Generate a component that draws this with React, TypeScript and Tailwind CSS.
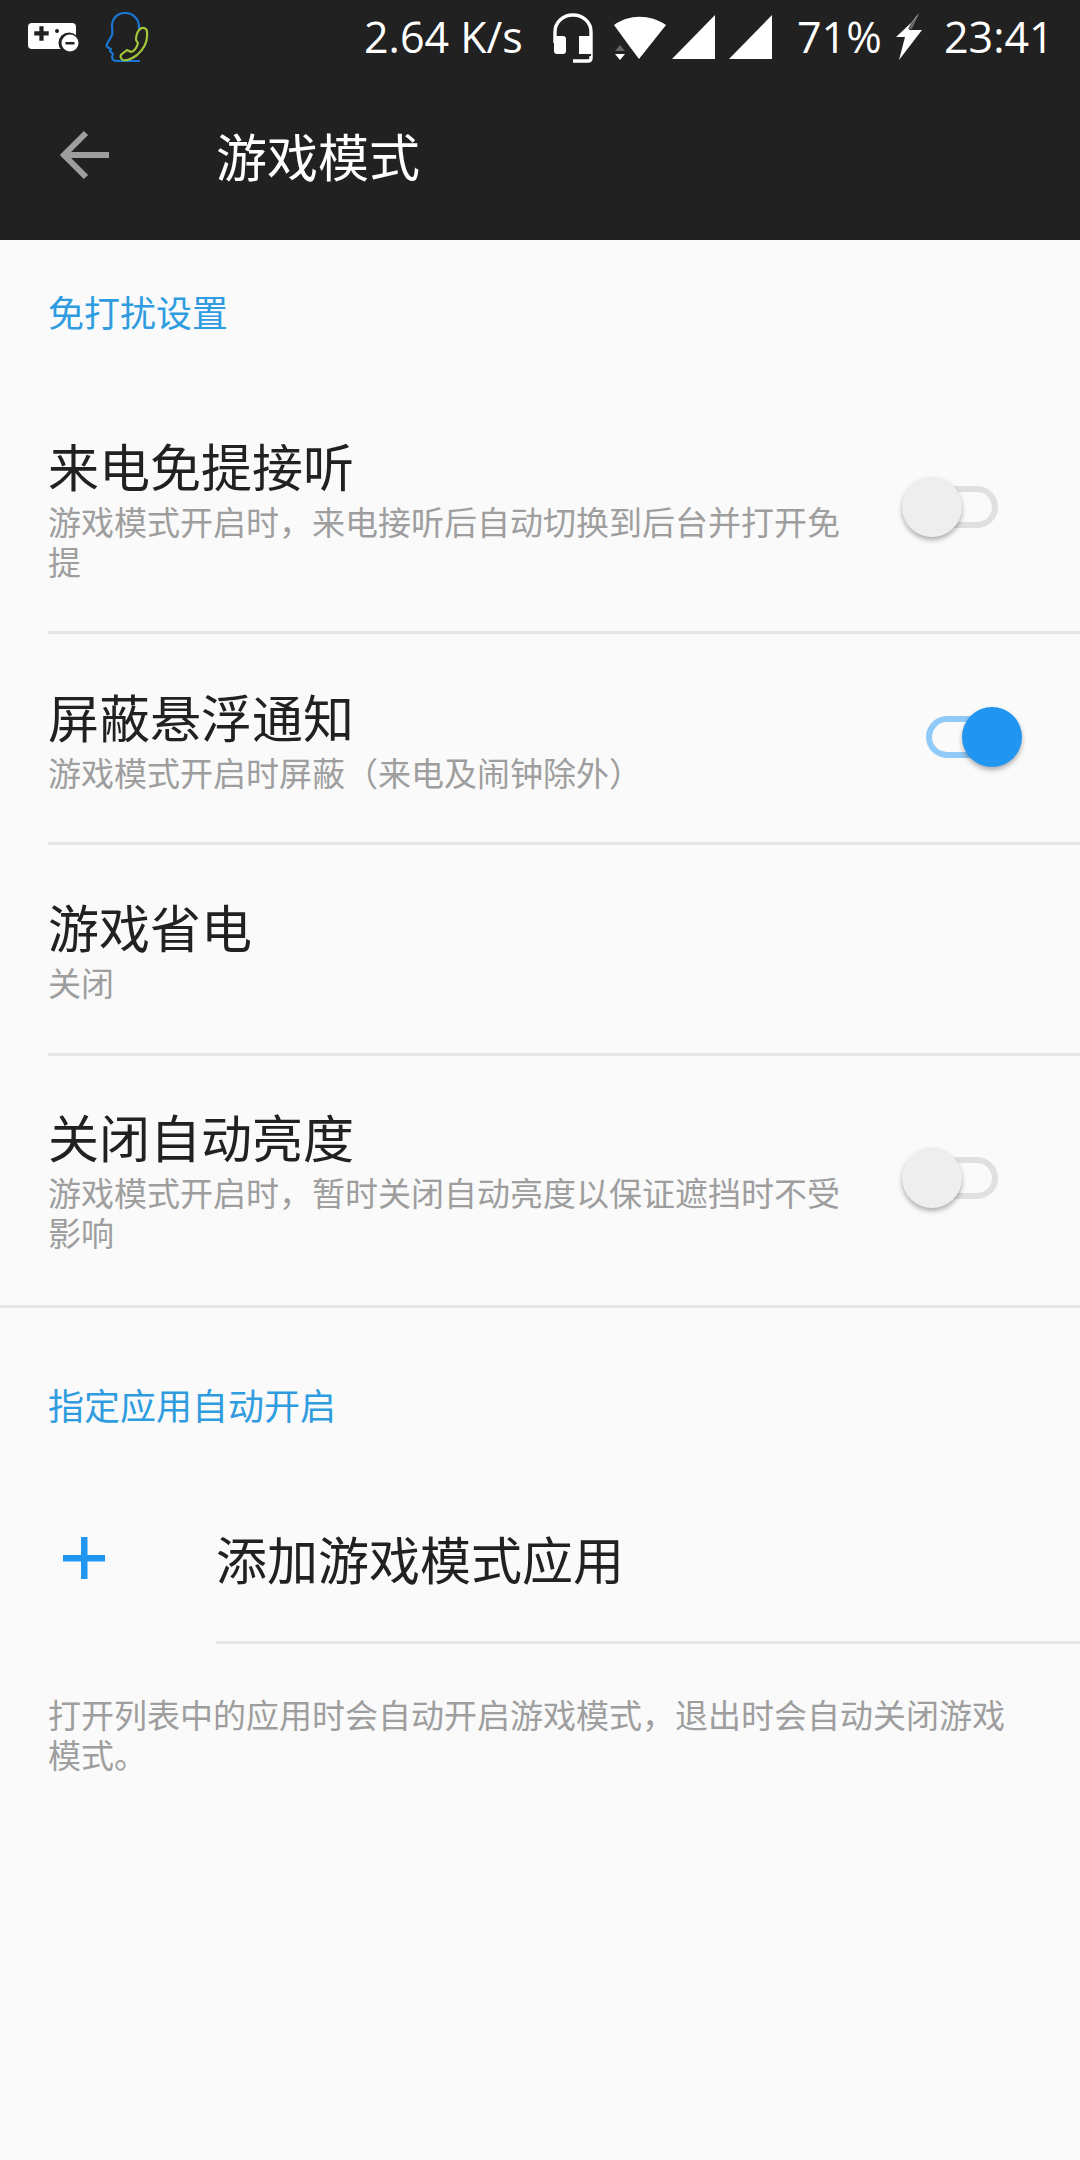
import React from "react";

const cjk = "font-['Noto_Sans_CJK_SC','Noto_Sans',sans-serif]";

function GameIcon() {
  return (
    <svg width="52" height="30" viewBox="0 0 52 30" className="ml-[28px] mt-[23px]">
      <rect x="0" y="0" width="48" height="26" rx="4" fill="#fff" />
      <path d="M11 5h5v6h6v5h-6v6h-5v-6H5v-5h6z" fill="#222" transform="translate(2 -1) scale(.85)" />
      <circle cx="29" cy="8" r="2" fill="#222" />
      <circle cx="41" cy="20" r="10.5" fill="#222" />
      <circle cx="42" cy="20" r="8.5" fill="#fff" />
      <rect x="37.500" y="19" width="9" height="2.500" fill="#222" />
    </svg>
  );
}

function ContactIcon() {
  return (
    <svg width="44" height="52" viewBox="0 0 44 52" className="ml-[25px] mt-[12px]" fill="none">
      <path
        d="M34 18V15C34 7 28 1 20 1 12 1 7 7 7 14c0 4 1 6 0 9l-5 9c-1 2 0 3 2 4l2 1-1 2 3 3-1 3c0 3 3 4 6 4h22"
        stroke="#1976d2"
        strokeWidth="2.2"
        strokeLinejoin="round"
      />
      <path
        d="M35 17c3-2 7-1 7 3 1 9-3 17-10 23-4 3-10 6-14 5-3-1-3-5-1-6l5-4 4 2c3-1 6-5 7-9l-2-3c0-4 1-8 4-11z"
        stroke="#a4c639"
        strokeWidth="2.200"
        strokeLinejoin="round"
      />
    </svg>
  );
}

function HeadsetIcon() {
  return (
    <svg width="40" height="50" viewBox="0 0 40 50" className="absolute left-[553px] top-[13px]" fill="none">
      <path d="M2 30V19C2 9 10 2 20 2s18 7 18 17v26c0 2-1 3-3 3H20" stroke="#fff" strokeWidth="3.4" />
      <rect x="1" y="23" width="12" height="18" rx="3" fill="#fff" />
      <rect x="26" y="23" width="12" height="18" fill="#fff" />
      <path d="M26 41h12v2H26z" fill="#222" />
    </svg>
  );
}

function WifiIcon() {
  return (
    <svg width="54" height="46" viewBox="0 0 54 46" className="absolute left-[613px] top-[15px]">
      <path d="M1 10C16-1 37-1 53 10L26 44 17 32z" fill="#fff" />
      <path d="M2 36l5-6 5 6z" fill="#666" />
      <path d="M2 39h10l-5 6z" fill="#fff" />
    </svg>
  );
}

function SignalIcon({ left }: { left: string }) {
  return (
    <svg width="43" height="45" viewBox="0 0 43 45" className={left}>
      <path d="M43 0v44H0z" fill="#fff" />
    </svg>
  );
}

function BoltIcon() {
  return (
    <svg width="27" height="48" viewBox="0 0 27 48" className="absolute left-[896px] top-[13px]">
      <path d="M23 0L13 17h13L3 47l6-23H0L15 10z" fill="#fff" />
      <path d="M23 1l-7 15h-4l3-6 8-9z" fill="#666" />
    </svg>
  );
}

function StatusBar() {
  return (
    <div className="relative flex h-[72px] items-start">
      <GameIcon />
      <ContactIcon />
      <span className="absolute left-[364px] top-[12px] font-['Open_Sans',sans-serif] text-[43px] leading-[50px] text-white">
        2.64 K/s
      </span>
      <HeadsetIcon />
      <WifiIcon />
      <SignalIcon left="absolute left-[672px] top-[15px]" />
      <SignalIcon left="absolute left-[729px] top-[15px]" />
      <span className="absolute left-[797px] top-[12px] font-['Open_Sans',sans-serif] text-[43px] leading-[50px] text-white">
        71%
      </span>
      <BoltIcon />
      <span className="absolute left-[944px] top-[12px] font-['Open_Sans',sans-serif] text-[43px] leading-[50px] text-white">
        23:41
      </span>
    </div>
  );
}

function Toggle({ on }: { on: boolean }) {
  return (
    <div className="relative mr-[82px] h-[42px] w-[72px] shrink-0">
      <div
        className={
          on
            ? "h-full w-full rounded-full border-[6px] border-[#90caf9]"
            : "h-full w-full rounded-full border-[6px] border-[#e0e0e0]"
        }
      />
      <div
        className={
          on
            ? "absolute left-[36px] top-[-9px] h-[60px] w-[60px] rounded-full bg-[#2196f0] shadow-[0_3px_5px_rgba(0,0,0,0.3)]"
            : "absolute left-[-24px] top-[-9px] h-[60px] w-[60px] rounded-full bg-[#eeeeee] shadow-[0_3px_5px_rgba(0,0,0,0.3)]"
        }
      />
    </div>
  );
}

function Row({
  title,
  sub,
  toggle,
  className,
}: {
  title: string;
  sub: string;
  toggle?: boolean;
  className: string;
}) {
  return (
    <div className={"flex items-center " + className}>
      <div className="ml-[48px] mr-[58px] w-[820px]">
        <div className="text-[51px] leading-[66px] text-[#212121]">{title}</div>
        <div className="mt-[3px] text-[33px] leading-[40px] text-[#9e9e9e]">{sub}</div>
      </div>
      {toggle !== undefined && <Toggle on={toggle} />}
    </div>
  );
}

export default function App() {
  return (
    <div className={"flex h-[2160px] w-[1080px] flex-col bg-[#fafafa] " + cjk}>
      <header className="h-[240px] bg-[#212121]">
        <StatusBar />
        <div className="flex h-[168px] items-center pb-[2px]">
          <svg width="50" height="50" viewBox="0 0 50 50" className="ml-[59px]" fill="none">
            <path d="M50 25H5M27 3L5 25l22 22" stroke="#9e9e9e" strokeWidth="6" />
          </svg>
          <span className="ml-[107px] text-[51px] leading-[64px] text-white">游戏模式</span>
        </div>
      </header>

      <div className="flex h-[112px] items-center pl-[48px] pt-[30px] text-[36px] leading-[48px] text-[#2f9ce0]">
        免打扰设置
      </div>

      <Row
        className="h-[279px] pt-[30px]"
        title="来电免提接听"
        sub="游戏模式开启时，来电接听后自动切换到后台并打开免提"
        toggle={false}
      />
      <div className="ml-[48px] h-[3px] bg-[#e5e5e5]" />
      <Row
        className="h-[208px] pb-[2px]"
        title="屏蔽悬浮通知"
        sub="游戏模式开启时屏蔽（来电及闹钟除外）"
        toggle={true}
      />
      <div className="ml-[48px] h-[3px] bg-[#e5e5e5]" />
      <Row className="h-[208px] pb-[4px]" title="游戏省电" sub="关闭" />
      <div className="ml-[48px] h-[3px] bg-[#e5e5e5]" />
      <Row
        className="h-[249px] pb-[6px]"
        title="关闭自动亮度"
        sub="游戏模式开启时，暂时关闭自动亮度以保证遮挡时不受影响"
        toggle={false}
      />
      <div className="h-[3px] bg-[#e5e5e5]" />

      <div className="flex h-[140px] items-center pl-[48px] pt-[52px] text-[36px] leading-[48px] text-[#2f9ce0]">
        指定应用自动开启
      </div>

      <div className="flex h-[193px] items-center pt-[27px]">
        <svg width="42" height="42" viewBox="0 0 42 42" className="ml-[63px]">
          <path d="M18 0h6.500v18H42v6.500H24.500V42H18V24.500H0V18h18z" fill="#2196f0" />
        </svg>
        <span className="ml-[111px] text-[51px] leading-[64px] text-[#212121]">添加游戏模式应用</span>
      </div>
      <div className="ml-[216px] h-[3px] bg-[#e5e5e5]" />

      <p className="ml-[48px] mt-[50px] w-[975px] text-[33px] leading-[40px] text-[#9e9e9e]">
        打开列表中的应用时会自动开启游戏模式，退出时会自动关闭游戏模式。
      </p>
    </div>
  );
}
